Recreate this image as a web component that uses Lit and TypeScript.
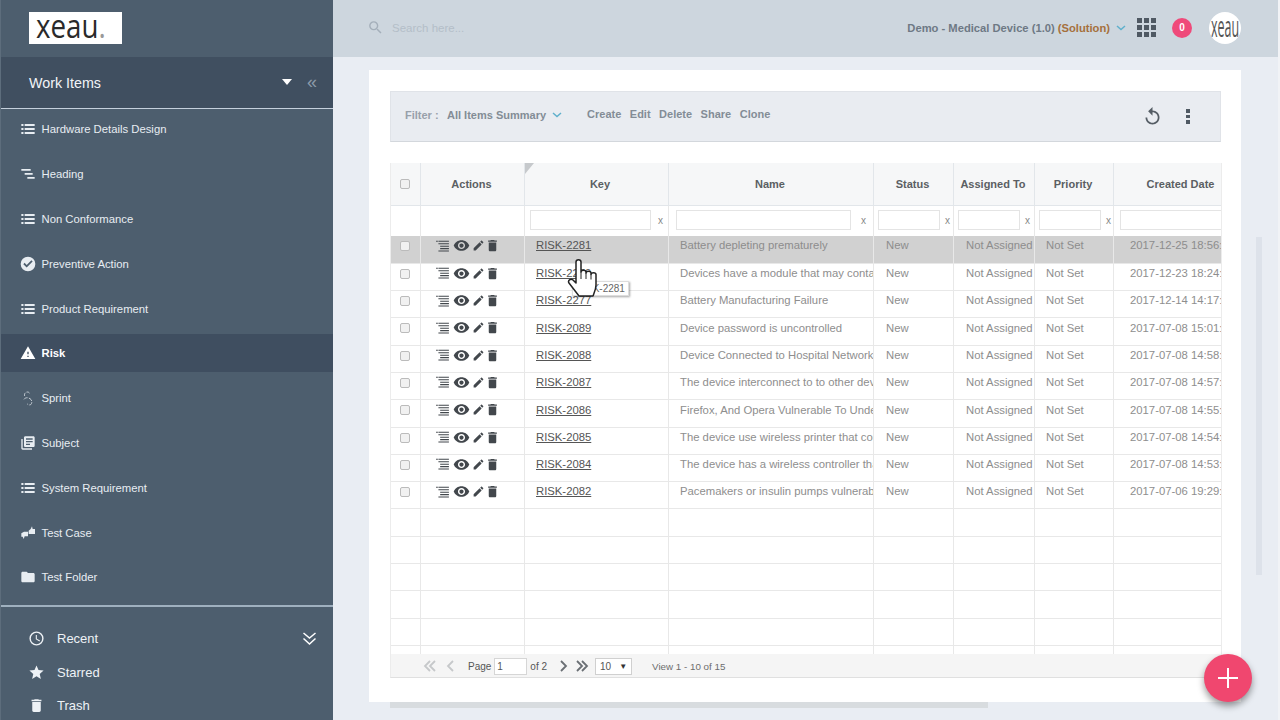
import { LitElement, html, css, svg } from "lit";
import { customElement } from "lit/decorators.js";

const P = {
  list: svg`<path d="M2 4.500h3.200v3H2zM7 4.500h15v3H7zM2 10.500h3.200v3H2zM7 10.500h15v3H7zM2 16.500h3.200v3H2zM7 16.500h15v3H7z"/>`,
  heading: svg`<path d="M2 4.500h14v2.800H2zM7 10.500h12v2.800H7zM11 16.500h11v2.800H11z"/>`,
  check: svg`<path fill-rule="evenodd" d="M12 1a11 11 0 1 0 0 22 11 11 0 0 0 0-22zm-2 16.200-5-5 1.900-1.900 3.100 3.100 7.100-7.100L19 8.200z"/>`,
  warn: svg`<path d="M1 21h22L12 2 1 21zm12-3h-2v-2h2v2zm0-4h-2v-4h2v4z"/>`,
  sprint: svg`<g fill="none" stroke="currentColor" stroke-width="1.500" opacity=".8"><path d="M7 9c-1-3 1-6 4-6 2 0 3 1 4 3" stroke-dasharray="5 2"/><path d="M6 14c2-3 6-3 9-1 3 2 4 6 1 9-2 1-4 0-5-1" stroke-dasharray="6 2"/></g>`,
  books: svg`<path d="M4 6H2v14c0 1.100.9 2 2 2h14v-2H4V6zm16-4H8c-1.100 0-2 .9-2 2v12c0 1.100.9 2 2 2h12c1.100 0 2-.9 2-2V4c0-1.100-.9-2-2-2zm-1 9H9V9h10v2zm-4 4H9v-2h6v2zm4-8H9V5h10v2z"/>`,
  cases: svg`<path d="M2 12.500 6 10h6v7H7l-1.500 4L4 17.500H2zM13 8.500 16 6l2-4 1 4h3.500v7.500H13z"/>`,
  folder: svg`<path d="M10 4H4c-1.100 0-2 .9-2 2v12c0 1.100.9 2 2 2h16c1.100 0 2-.9 2-2V8c0-1.100-.9-2-2-2h-8l-2-2z"/>`,
  star: svg`<path d="M12 17.270 18.180 21l-1.640-7.030L22 9.240l-7.190-.61L12 2 9.190 8.630 2 9.240l5.460 4.730L5.820 21z"/>`,
  trash: svg`<path d="M6 19c0 1.100.9 2 2 2h8c1.100 0 2-.9 2-2V7H6v12zM19 4h-3.500l-1-1h-5l-1 1H5v2h14V4z"/>`,
  eye: svg`<path d="M12 4.500C7 4.500 2.730 7.610 1 12c1.730 4.390 6 7.500 11 7.500s9.270-3.110 11-7.500c-1.730-4.390-6-7.500-11-7.500zM12 17c-2.760 0-5-2.240-5-5s2.240-5 5-5 5 2.240 5 5-2.240 5-5 5zm0-8c-1.660 0-3 1.340-3 3s1.340 3 3 3 3-1.340 3-3-1.340-3-3-3z"/>`,
  pencil: svg`<path d="M3 17.250V21h3.750L17.810 9.940l-3.750-3.750L3 17.250zM20.710 7.040c.39-.39.39-1.020 0-1.410l-2.340-2.340c-.39-.39-1.020-.39-1.410 0l-1.830 1.830 3.750 3.750 1.830-1.830z"/>`,
  tree: svg`<path d="M1 3h3v1.800H1zM5 3h18v1.800H5zM5 7.200h18V9H5zM8 11.400h15v1.800H8zM8 15.600h15v1.800H8zM5 19.800h18v1.800H5z"/>`,
  replay: svg`<path d="M12 5V1L7 6l5 5V7c3.310 0 6 2.690 6 6s-2.690 6-6 6-6-2.690-6-6H4c0 4.420 3.580 8 8 8s8-3.580 8-8-3.580-8-8-8z"/>`,
  search: svg`<path d="M15.500 14h-.79l-.28-.27A6.470 6.470 0 0 0 16 9.500 6.500 6.500 0 1 0 9.500 16c1.610 0 3.090-.59 4.230-1.570l.27.28v.79l5 4.990L20.490 19l-4.990-5zm-6 0C7.010 14 5 11.990 5 9.500S7.010 5 9.500 5 14 7.010 14 9.500 11.990 14 9.500 14z"/>`,
  clock: svg`<path d="M12 2a10 10 0 1 0 0 20 10 10 0 0 0 0-20zm0 18a8 8 0 1 1 0-16 8 8 0 0 1 0 16zm.5-13H11v6l5.200 3.100.8-1.200-4.500-2.700z"/>`,
};

const icon = (p: unknown) => html`<svg viewBox="0 0 24 24" fill="currentColor">${p}</svg>`;

const NAV: [unknown, string, boolean?][] = [
  [P.list, "Hardware Details Design"],
  [P.heading, "Heading"],
  [P.list, "Non Conformance"],
  [P.check, "Preventive Action"],
  [P.list, "Product Requirement"],
  [P.warn, "Risk", true],
  [P.sprint, "Sprint"],
  [P.books, "Subject"],
  [P.list, "System Requirement"],
  [P.cases, "Test Case"],
  [P.folder, "Test Folder"],
];

const COLS = ["Status", "Assigned To", "Priority", "Created Date"];

const ROWS = [
  ["RISK-2281", "Battery depleting prematurely", "2017-12-25 18:56:12"],
  ["RISK-2279", "Devices have a module that may contain a flaw", "2017-12-23 18:24:10"],
  ["RISK-2277", "Battery Manufacturing Failure", "2017-12-14 14:17:33"],
  ["RISK-2089", "Device password is uncontrolled", "2017-07-08 15:01:20"],
  ["RISK-2088", "Device Connected to Hospital Network", "2017-07-08 14:58:41"],
  ["RISK-2087", "The device interconnect to to other devices", "2017-07-08 14:57:02"],
  ["RISK-2086", "Firefox, And Opera Vulnerable To Underflow", "2017-07-08 14:55:37"],
  ["RISK-2085", "The device use wireless printer that could fail", "2017-07-08 14:54:19"],
  ["RISK-2084", "The device has a wireless controller that fails", "2017-07-08 14:53:08"],
  ["RISK-2082", "Pacemakers or insulin pumps vulnerable", "2017-07-06 19:29:44"],
];

@customElement("app-root")
export class AppRoot extends LitElement {
  static override styles = css`
    :host {
      display: flex;
      position: relative;
      width: 1280px;
      height: 720px;
      overflow: hidden;
      background: #e9edf3;
      font-family: "Liberation Sans", Arial, sans-serif;
      font-size: 12px;
    }
    svg {
      display: block;
    }

    /* sidebar */
    .side {
      width: 333px;
      flex: none;
      display: flex;
      flex-direction: column;
      background: #4d5e6e;
      color: #eef2f6;
      border-left: 1px solid #5d6d7c;
      box-sizing: border-box;
    }
    .logo-wrap {
      height: 57px;
      flex: none;
      padding: 12px 0 0 28px;
      box-sizing: border-box;
    }
    .logo {
      width: 93px;
      height: 32px;
      background: #fff;
      color: #2a2a2a;
      font: 33px/28px "Open Sans", sans-serif;
      padding-left: 7px;
      box-sizing: border-box;
      overflow: hidden;
    }
    .logo span {
      display: inline-block;
      transform: scaleX(0.84);
      transform-origin: left;
    }
    .logo i {
      font-style: normal;
      color: #999;
    }
    .work {
      height: 52px;
      flex: none;
      display: flex;
      align-items: center;
      background: #404f60;
      border-bottom: 1px solid #c5d0dc;
      box-sizing: border-box;
      padding-left: 28px;
      font-size: 14.300px;
      color: #f2f5f8;
    }
    .work span {
      flex: 1;
    }
    .tri {
      width: 0;
      height: 0;
      border: 5.500px solid transparent;
      border-top: 6px solid #fff;
      border-bottom: 0;
      margin: -2px 15px 0 0;
    }
    .coll {
      color: #8c9aa8;
      font-size: 18px;
      margin: -1px 16px 0 0;
    }
    .nav {
      flex: 1;
      margin-top: -2px;
    }
    .item {
      height: 44.800px;
      display: flex;
      align-items: center;
      gap: 5.500px;
      padding-left: 19px;
      box-sizing: border-box;
      color: #e8edf2;
      font-size: 11.300px;
    }
    .item svg {
      width: 16px;
      height: 16px;
      flex: none;
    }
    .item.on {
      background: linear-gradient(#3f4e60, #3f4e60) center / 100% 38px no-repeat;
      font-weight: bold;
      color: #fff;
    }
    .extra {
      flex: none;
      height: 115px;
      border-top: 2px solid #9fb0bf;
      box-sizing: border-box;
      padding: 15px 16px 0 27px;
      font-size: 13px;
    }
    .x-row {
      height: 33.500px;
      display: flex;
      align-items: center;
      gap: 12px;
    }
    .x-row svg {
      width: 17px;
      height: 17px;
    }
    .x-row b {
      font-weight: normal;
      flex: 1;
    }
    .x-row .dbl {
      width: 15px;
      height: 15px;
    }

    /* top bar */
    .main {
      flex: 1;
      min-width: 0;
      display: flex;
      flex-direction: column;
    }
    .top {
      height: 57px;
      flex: none;
      background: #cdd6de;
      display: flex;
      align-items: center;
      padding: 0 39px 2px 34px;
      box-sizing: border-box;
    }
    .top .search {
      width: 17px;
      height: 17px;
      color: #a4afba;
    }
    .top .ph {
      flex: 1;
      margin-left: 8px;
      color: #b4bec8;
      font-size: 11.500px;
    }
    .ctx {
      font-weight: bold;
      font-size: 11.200px;
      color: #6e7985;
    }
    .ctx em {
      font-style: normal;
      color: #a5703c;
    }
    .chev {
      width: 10px;
      height: 6px;
      fill: none;
      stroke: #5fb0cc;
      stroke-width: 1.500;
    }
    .top .chev {
      margin: 0 11px 0 6px;
    }
    .apps {
      display: grid;
      grid-template-columns: repeat(3, 5px);
      grid-auto-rows: 5px;
      gap: 2px;
      margin-right: 16px;
    }
    .apps i {
      background: #4f5963;
    }
    .badge {
      width: 20px;
      height: 20px;
      border-radius: 50%;
      background: #ef4a7a;
      color: #fff;
      font-size: 10px;
      font-weight: bold;
      display: flex;
      align-items: center;
      justify-content: center;
      margin-right: 17px;
    }
    .avatar {
      width: 32px;
      height: 32px;
      border-radius: 50%;
      background: #fff;
      overflow: hidden;
      display: flex;
      align-items: center;
      justify-content: center;
      color: #555;
    }
    .avatar span {
      font: 12.500px/16px "Open Sans", sans-serif;
      transform: scale(1, 2.300);
    }

    /* card */
    .body {
      flex: 1;
      min-height: 0;
      padding: 13px 39px 0 36px;
    }
    .card {
      height: 632px;
      background: #fff;
      padding: 21px 19px 0 21px;
      box-sizing: border-box;
      display: flex;
      flex-direction: column;
      gap: 21px;
    }
    .filter {
      height: 51px;
      flex: none;
      background: #e9ecf1;
      border: 1px solid #e0e3e8;
      border-bottom-color: #d3d7dc;
      box-sizing: border-box;
      display: flex;
      align-items: center;
      margin-right: 1px;
      padding: 0 30px 5px 14px;
      color: #838c96;
      font-weight: bold;
      font-size: 11px;
    }
    .filter .lbl {
      color: #98a0aa;
      margin: 1px 8px 0 0;
      width: 34px;
    }
    .filter .sel {
      margin-top: 1px;
    }
    .filter .chev {
      margin: 1px 25px 0 6px;
    }
    .filter a {
      margin-right: 8.500px;
    }
    .filter .grow {
      flex: 1;
    }
    .filter .re {
      width: 21px;
      height: 21px;
      color: #555d65;
      margin: 5px 23px 0 0;
    }
    .kebab {
      display: flex;
      flex-direction: column;
      gap: 2px;
      margin-top: 5px;
    }
    .kebab i {
      width: 4px;
      height: 3.500px;
      background: #4f5963;
    }

    /* grid */
    .grid {
      height: 515px;
      flex: none;
      display: flex;
      flex-direction: column;
      overflow: hidden;
      border: 1px solid #ececec;
      border-top: 0;
      border-bottom-color: #e0e0e0;
      box-sizing: border-box;
      color: #8e8e8e;
      --cols: 30px 104px 144px 205px 80px 81px 79px 134px;
    }
    .r {
      display: grid;
      grid-template-columns: var(--cols);
    }
    .r > div {
      border-right: 1px solid #e8e8e8;
      box-sizing: border-box;
      overflow: hidden;
      white-space: nowrap;
      min-width: 0;
    }
    .head {
      height: 43px;
      flex: none;
      background: #f6f7f8;
    }
    .head > div {
      display: flex;
      align-items: center;
      justify-content: center;
      font-weight: bold;
      font-size: 11px;
      color: #5b5f63;
      border-color: #e2e6ea;
      border-bottom: 1px solid #e2e6ea;
      padding-right: 2px;
    }
    .head > .corner {
      position: relative;
      padding: 0 0 0 7px;
    }
    .head > .last {
      padding: 0;
    }
    .corner::before {
      content: "";
      position: absolute;
      left: 0;
      top: 0;
      border-top: 11px solid #c6c9cc;
      border-right: 9px solid transparent;
    }
    .cb {
      width: 10px;
      height: 10px;
      border: 1px solid #bbb;
      border-radius: 2px;
      background: #f1f1f1;
      box-sizing: border-box;
    }
    .frow {
      height: 30px;
      flex: none;
    }
    .frow > div {
      display: flex;
      align-items: center;
      padding: 0 0 2px 5px;
      color: #888;
      font-size: 10px;
    }
    .frow .f-name {
      padding-left: 7px;
    }
    .frow .f-small {
      padding-left: 4px;
    }
    .frow .f-date {
      padding-left: 6px;
    }
    .frow input {
      all: unset;
      flex: none;
      height: 20px;
      background: #fff;
      border: 1px solid #e4e4e4;
      box-sizing: border-box;
      margin-right: 5px;
    }
    .frow .f-key input {
      width: 121px;
      margin-right: 7px;
    }
    .frow .f-name input {
      width: 175px;
      margin-right: 10px;
    }
    .frow .f-small input {
      width: 62px;
    }
    .frow .f-date input {
      width: 140px;
    }
    .rows {
      flex: 1;
      min-height: 0;
      overflow: hidden;
    }
    .row {
      height: 27.300px;
      border-bottom: 1px solid #e8e8e8;
      box-sizing: border-box;
      font-size: 11.300px;
    }
    .row > div {
      padding: 2.300px 0 0 11px;
      line-height: 14px;
    }
    .row.sel {
      height: 27.800px;
      background: #d1d1d1;
      color: #8d8d8d;
    }
    .row .c0 {
      display: flex;
      justify-content: center;
      padding: 5px 2px 0 0;
    }
    .row .acts {
      display: flex;
      gap: 2px;
      align-items: flex-start;
      padding: 1px 0 0 13.500px;
      color: #42474c;
    }
    .acts span {
      height: 17px;
      display: flex;
      align-items: center;
      flex: none;
    }
    .acts svg {
      width: 15px;
      height: 15px;
    }
    .acts .ey svg {
      width: 17px;
      height: 17px;
    }
    .acts .pe {
      margin-right: -2px;
    }
    .acts .pe svg {
      width: 13px;
      height: 13px;
    }
    .acts .tr {
      margin-right: 1px;
    }
    .acts .tr svg {
      width: 15px;
      height: 14px;
    }
    .key {
      color: #555;
      text-decoration: underline;
    }
    .row > .date {
      padding-left: 16px;
    }
    .row > .st {
      padding-left: 12px;
    }

    /* pager */
    .pager {
      height: 23px;
      flex: none;
      background: #f5f5f5;
      display: flex;
      align-items: center;
      color: #555;
      font-size: 10px;
      padding: 1px 0 0 32px;
      box-sizing: border-box;
    }
    .pg {
      width: 14px;
      height: 14px;
      fill: none;
      stroke-width: 1.800;
      stroke: #c6c8ca;
      flex: none;
    }
    .pg.on {
      stroke: #6a6f74;
    }
    .pg.prev {
      margin: 0 10px 0 7px;
    }
    .pg.next {
      margin: 0 5px 0 9px;
    }
    .pager input {
      all: unset;
      width: 33px;
      height: 17px;
      background: #fff;
      border: 1px solid #d6d6d6;
      box-sizing: border-box;
      margin: 0 3px 0 3px;
      padding-left: 2px;
      line-height: 15px;
    }
    .size {
      width: 37px;
      height: 17px;
      background: #fff;
      border: 1px solid #d0d0d0;
      box-sizing: border-box;
      display: flex;
      align-items: center;
      justify-content: space-between;
      padding: 0 4px;
      margin: 0 20px 0 6px;
    }
    .size i {
      font-style: normal;
      font-size: 8px;
      color: #333;
    }
    .view {
      color: #6d6d6d;
      font-size: 9.800px;
    }

    /* things lying over the page */
    .hthumb {
      position: absolute;
      left: 390px;
      top: 702px;
      width: 598px;
      height: 6px;
      background: #d8dcdf;
    }
    .vthumb {
      position: absolute;
      left: 1256px;
      top: 237px;
      width: 6px;
      height: 338px;
      background: #dde2ea;
    }
    .vtrack {
      position: absolute;
      right: 0;
      top: 0;
      width: 2px;
      height: 720px;
      background: #f1f3f6;
    }
    .tip {
      position: absolute;
      left: 572px;
      top: 281px;
      width: 57px;
      height: 15px;
      background: #fff;
      border: 1px solid #ddd;
      box-shadow: 1px 1px 2px rgba(0, 0, 0, 0.35);
      box-sizing: border-box;
      font-size: 10px;
      color: #666;
      line-height: 13px;
      padding-left: 3px;
    }
    .hand {
      position: absolute;
      left: 567px;
      top: 259px;
      width: 31px;
      height: 38px;
    }
    .fab {
      position: absolute;
      left: 1204px;
      top: 654px;
      width: 48px;
      height: 48px;
      border-radius: 50%;
      background: #f0476f;
      box-shadow: 0 4px 7px rgba(0, 0, 0, 0.4);
      display: flex;
      align-items: center;
      justify-content: center;
    }
    .fab svg {
      width: 22px;
      height: 22px;
      stroke: #fff;
      stroke-width: 2;
    }
  `;

  private chevron() {
    return html`<svg class="chev" viewBox="0 0 10 6"><path d="M1 1l4 3.500L9 1" /></svg>`;
  }

  private pageIcon(d: string, cls: string) {
    return html`<svg class="pg ${cls}" viewBox="0 0 14 14"><path d=${d} /></svg>`;
  }

  private renderRow(r: string[] | null, i: number) {
    if (!r) {
      return html`<div class="r row">
        <div></div><div></div><div></div><div></div><div></div><div></div><div></div><div></div>
      </div>`;
    }
    return html`<div class="r row ${i === 0 ? "sel" : ""}">
      <div class="c0"><div class="cb"></div></div>
      <div class="acts">
        <span class="tr">${icon(P.tree)}</span>
        <span class="ey">${icon(P.eye)}</span>
        <span class="pe">${icon(P.pencil)}</span>
        <span>${icon(P.trash)}</span>
      </div>
      <div><span class="key">${r[0]}</span></div>
      <div>${r[1]}</div>
      <div class="st">New</div>
      <div class="st">Not Assigned</div>
      <div>Not Set</div>
      <div class="date">${r[2]}</div>
    </div>`;
  }

  override render() {
    const rows: (string[] | null)[] = [...ROWS, null, null, null, null, null, null];
    return html`
      <aside class="side">
        <div class="logo-wrap"><div class="logo"><span>xeau<i>.</i></span></div></div>
        <div class="work">
          <span>Work Items</span>
          <div class="tri"></div>
          <div class="coll">«</div>
        </div>
        <div class="nav">
          ${NAV.map(
            ([p, label, on]) => html`<div class="item ${on ? "on" : ""}">${icon(p)}${label}</div>`
          )}
        </div>
        <div class="extra">
          <div class="x-row">
            ${icon(P.clock)}<b>Recent</b>
            <svg class="dbl" viewBox="0 0 15 15" fill="none" stroke="#fff" stroke-width="1.500">
              <path d="M1.500 2l6 5 6-5M1.500 7.500l6 5.500 6-5.500" />
            </svg>
          </div>
          <div class="x-row">${icon(P.star)}<b>Starred</b></div>
          <div class="x-row">${icon(P.trash)}<b>Trash</b></div>
        </div>
      </aside>

      <div class="main">
        <header class="top">
          <span class="search">${icon(P.search)}</span>
          <span class="ph">Search here...</span>
          <span class="ctx">Demo - Medical Device (1.0) <em>(Solution)</em></span>
          ${this.chevron()}
          <div class="apps">${Array.from({ length: 9 }, () => html`<i></i>`)}</div>
          <div class="badge">0</div>
          <div class="avatar"><span>xeau</span></div>
        </header>
        <div class="body">
          <section class="card">
            <div class="filter">
              <span class="lbl">Filter :</span>
              <span class="sel">All Items Summary</span>
              ${this.chevron()}
              <a>Create</a><a>Edit</a><a>Delete</a><a>Share</a><a>Clone</a>
              <span class="grow"></span>
              <span class="re">${icon(P.replay)}</span>
              <div class="kebab"><i></i><i></i><i></i></div>
            </div>
            <div class="grid">
              <div class="r head">
                <div><div class="cb"></div></div>
                <div>Actions</div>
                <div class="corner">Key</div>
                <div>Name</div>
                <div>${COLS[0]}</div>
                <div>${COLS[1]}</div>
                <div>${COLS[2]}</div>
                <div class="last">${COLS[3]}</div>
              </div>
              <div class="r frow">
                <div></div>
                <div></div>
                <div class="f-key"><input />x</div>
                <div class="f-name"><input />x</div>
                <div class="f-small"><input />x</div>
                <div class="f-small"><input />x</div>
                <div class="f-small"><input />x</div>
                <div class="f-date"><input /></div>
              </div>
              <div class="rows">${rows.map((r, i) => this.renderRow(r, i))}</div>
              <div class="pager">
                ${this.pageIcon("M7 2L2 7l5 5M12 2L7 7l5 5", "")}
                ${this.pageIcon("M9 2L4 7l5 5", "prev")}
                <span>Page</span><input value="1" /><span>of 2</span>
                ${this.pageIcon("M5 2l5 5-5 5", "on next")}
                ${this.pageIcon("M2 2l5 5-5 5M7 2l5 5-5 5", "on")}
                <div class="size">10<i>▼</i></div>
                <span class="view">View 1 - 10 of 15</span>
              </div>
            </div>
          </section>
        </div>
      </div>

      <div class="vtrack"></div>
      <div class="vthumb"></div>
      <div class="hthumb"></div>
      <div class="tip">RISK-2281</div>
      <svg class="hand" viewBox="0 0 31 38">
        <path
          d="M9 3c0-3 5-3 5 0v10c0-2.500 5-2.500 5 0v1c0-2.500 5-2.500 5 0v1.500c0-2.500 5-2.500 5 0V26c0 4-1.500 7-3 11H12C9 33 5 28 2 24c-1.500-2.500 1.500-5 4-3l3 3z"
          fill="#fff"
          stroke="#222"
          stroke-width="1.500"
          stroke-linejoin="round"
        />
        <path d="M14 13v7M19 14v6M24 15.500v5" stroke="#222" stroke-width="1" />
      </svg>
      <div class="fab">
        <svg viewBox="0 0 22 22"><path d="M11 1v20M1 11h20" /></svg>
      </div>
    `;
  }
}

declare global {
  interface HTMLElementTagNameMap {
    "app-root": AppRoot;
  }
}
